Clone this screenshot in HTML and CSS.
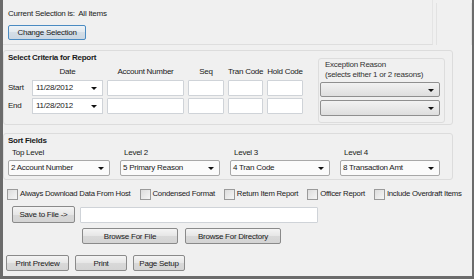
FILE: index.html
```html
<!DOCTYPE html>
<html lang="en">
<head>
  <meta charset="UTF-8">
  <title>Report Options</title>
  <link rel="stylesheet" href="styles.css">
</head>
<body>
  <div class="window">
    <!-- Seleccion actual -->
    <div class="top">
      <div class="selection">
        <p class="current">Current Selection is:&nbsp; All Items</p>
        <button class="btn btn-default">Change Selection</button>
      </div>
      <div class="side"></div>
    </div>

    <div class="group criteria">
      <div class="criteria-main">
        <h2>Select Criteria for Report</h2>
        <div class="criteria-grid">
          <span></span>
          <span class="col-label">Date</span>
          <span class="col-label">Account Number</span>
          <span class="col-label">Seq</span>
          <span class="col-label">Tran Code</span>
          <span class="col-label">Hold Code</span>

          <span class="row-label">Start</span>
          <div class="date">11/28/2012<i class="arrow"></i></div>
          <div class="input"></div>
          <div class="input"></div>
          <div class="input"></div>
          <div class="input"></div>

          <span class="row-label">End</span>
          <div class="date">11/28/2012<i class="arrow"></i></div>
          <div class="input"></div>
          <div class="input"></div>
          <div class="input"></div>
          <div class="input"></div>
        </div>
      </div>

      <div class="exception">
        <p>Exception Reason<br>(selects either 1 or 2 reasons)</p>
        <div class="combo combo-gray"><i class="arrow"></i></div>
        <div class="combo combo-gray"><i class="arrow"></i></div>
      </div>
    </div>

    <div class="group sort">
      <h2>Sort Fields</h2>
      <div class="sort-grid">
        <span class="col-label">Top Level</span>
        <span class="col-label">Level 2</span>
        <span class="col-label">Level 3</span>
        <span class="col-label">Level 4</span>
        <div class="combo">2 Account Number<i class="arrow"></i></div>
        <div class="combo">5 Primary Reason<i class="arrow"></i></div>
        <div class="combo">4 Tran Code<i class="arrow"></i></div>
        <div class="combo">8 Transaction Amt<i class="arrow"></i></div>
      </div>
    </div>

    <div class="checks">
      <label><i class="box"></i>Always Download Data From Host</label>
      <label><i class="box"></i>Condensed Format</label>
      <label><i class="box"></i>Return Item Report</label>
      <label><i class="box"></i>Officer Report</label>
      <label><i class="box"></i>Include Overdraft Items</label>
    </div>

    <div class="save-row">
      <button class="btn btn-save">Save to File -&gt;</button>
      <div class="input file-path"></div>
    </div>

    <div class="browse-row">
      <button class="btn btn-browse">Browse For File</button>
      <button class="btn btn-browse">Browse For Directory</button>
    </div>

    <div class="print-row">
      <button class="btn btn-preview">Print Preview</button>
      <button class="btn btn-print">Print</button>
      <button class="btn btn-print">Page Setup</button>
    </div>
  </div>
</body>
</html>
```

FILE: styles.css
```css
body {
  margin: 0;
  font-family: "Liberation Sans", Arial, sans-serif;
  font-size: 8px;
  letter-spacing: -0.25px;
  color: #1a1a1a;
}

.window {
  width: 469px;
  height: 276px;
  background-color: #f0f0f0;
  border-left: 3px solid #6b6b6b;
  border-right: 2px solid #6b6b6b;
  border-bottom: 3px solid #6b6b6b;
  overflow: hidden;
}

p, h2 {
  margin: 0;
}

/* Panel de arriba */
.top {
  display: flex;
  height: 45px;
}

.selection {
  width: 430px;
  padding: 9px 0 0 5px;
  border-bottom: 1px solid #dedede;
  border-right: 1px solid #e4e4e4;
  box-sizing: border-box;
}

.current {
  line-height: 10px;
}

.side {
  width: 34px;
  margin: 3px 0 0 3px;
  border-left: 1px solid #e2e2e2;
  border-right: 1px solid #e2e2e2;
}

.btn {
  font-family: inherit;
  font-size: 8px;
  letter-spacing: -0.25px;
  color: #1a1a1a;
  padding: 0;
  border: 1px solid #8a8a8a;
  border-radius: 2px;
  background-image: linear-gradient(#f4f4f4, #e6e6e6 50%, #d9d9d9 50%, #d4d4d4);
  height: 16px;
}

.btn-default {
  display: block;
  margin-top: 6px;
  width: 78px;
  height: 15px;
  border-color: #4a8bc2;
  background-image: linear-gradient(#eef3f7, #e1e8ee 50%, #d3dde6 50%, #cbd7e2);
}

/* Grupos */
.group {
  margin: 5px 19px 0 0;
  border: 1px solid #dcdcdc;
  border-radius: 3px;
  padding: 2px 4px 0 4px;
}

.group h2 {
  font-size: 8px;
  font-weight: bold;
  line-height: 10px;
}

.criteria {
  display: flex;
  align-items: flex-start;
  height: 71px;
}

.criteria-grid {
  display: grid;
  grid-template-columns: 20px 71px 77px 36px 35px 36px;
  grid-template-rows: 12px 16px 16px;
  column-gap: 4px;
  row-gap: 2px;
  margin-top: 3px;
  align-items: center;
}

.col-label {
  text-align: center;
  line-height: 10px;
  white-space: nowrap;
}

.row-label {
  line-height: 10px;
}

.input {
  height: 14px;
  background-color: #ffffff;
  border: 1px solid #cfd3d8;
  border-radius: 1px;
}

.date {
  position: relative;
  height: 14px;
  line-height: 14px;
  padding-left: 3px;
  background-color: #ffffff;
  border: 1px solid #cfd3d8;
}

.arrow {
  position: absolute;
  right: 5px;
  top: 6px;
  border-left: 3px solid transparent;
  border-right: 3px solid transparent;
  border-top: 3px solid #111;
}

.exception {
  width: 127px;
  height: 65px;
  margin: 5px 0 0 15px;
  border: 1px solid #dddddd;
  border-radius: 3px;
  padding: 1px 0 0 1px;
  box-sizing: border-box;
}

.exception p {
  padding-left: 5px;
  line-height: 10px;
  color: #333;
}

.combo {
  position: relative;
  height: 14px;
  line-height: 14px;
  padding-left: 2px;
  border: 1px solid #a8a8a8;
  border-radius: 2px;
  background-color: #fbfbfb;
}

.combo-gray {
  width: 116px;
  height: 13px;
  margin-top: 2px;
  background-image: linear-gradient(#f2f2f2, #dedede);
  border-color: #8f8f8f;
}

.combo-gray + .combo-gray {
  height: 14px;
  margin-top: 3px;
}

.sort {
  margin-top: 8px;
  height: 43px;
}

.sort-grid {
  display: grid;
  grid-template-columns: 102px 100px 100px 100px;
  column-gap: 10px;
  row-gap: 2px;
  margin-top: 2px;
}

.sort-grid .col-label {
  text-align: left;
  padding-left: 4px;
}

/* Casillas */
.checks {
  display: flex;
  gap: 9px;
  margin: 8px 0 0 4px;
  line-height: 12px;
  font-size: 7.75px;
}

.checks label {
  display: flex;
  align-items: center;
  gap: 2px;
  white-space: nowrap;
}

.box {
  width: 9px;
  height: 9px;
  border: 1px solid #9a9a9a;
  background-image: linear-gradient(135deg, #dcdcdc, #f6f6f6);
}

.save-row {
  display: flex;
  align-items: center;
  gap: 5px;
  margin: 6px 0 0 9px;
}

.btn-save {
  width: 63px;
  height: 17px;
}

.file-path {
  width: 236px;
}

.browse-row {
  display: flex;
  gap: 7px;
  margin: 5px 0 0 79px;
}

.btn-browse {
  width: 96px;
}

.print-row {
  display: flex;
  gap: 6px;
  margin: 11px 0 0 3px;
}

.btn-preview {
  width: 63px;
}

.btn-print {
  width: 52px;
}
```
